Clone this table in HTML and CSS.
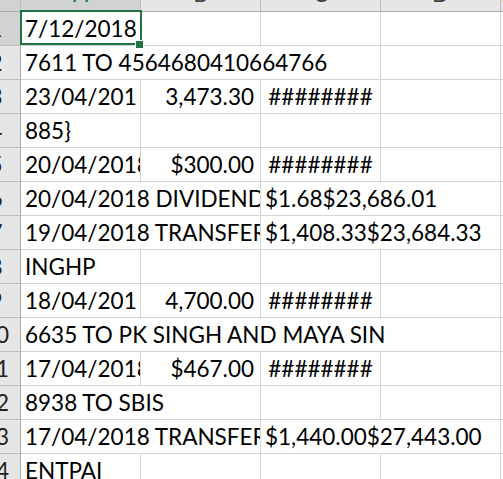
FILE: index.html
```html
<!DOCTYPE html>
<html>
<head>
<meta charset="utf-8">
<link rel="stylesheet" href="styles.css">
</head>
<body>
<div class="sheet">
  <div class="corner"></div>
  <div class="ch sel"><span>A</span></div>
  <div class="ch"><span>B</span></div>
  <div class="ch"><span>C</span></div>
  <div class="ch"><span>D</span></div>
  <div class="ch"><span>E</span></div>

  <div class="rh sel"><span>1</span></div>
  <div class="c active">7/12/2018<span class="selbox"></span><span class="handle"></span></div>
  <div class="c"></div><div class="c"></div><div class="c"></div><div class="c e"></div>

  <div class="rh"><span>2</span></div>
  <div class="c s3">7611 TO 4564680410664766</div>
  <div class="c"></div><div class="c e"></div>

  <div class="rh"><span>3</span></div>
  <div class="c">23/04/201</div>
  <div class="c r">3,473.30</div>
  <div class="c m">########</div>
  <div class="c"></div><div class="c e"></div>

  <div class="rh"><span>4</span></div>
  <div class="c">885}</div>
  <div class="c"></div><div class="c"></div><div class="c"></div><div class="c e"></div>

  <div class="rh"><span>5</span></div>
  <div class="c">20/04/2018</div>
  <div class="c r">$300.00</div>
  <div class="c m">########</div>
  <div class="c"></div><div class="c e"></div>

  <div class="rh"><span>6</span></div>
  <div class="c s2">20/04/2018 DIVIDEND</div>
  <div class="c s2">$1.68$23,686.01</div>
  <div class="c e"></div>

  <div class="rh"><span>7</span></div>
  <div class="c s2">19/04/2018 TRANSFER</div>
  <div class="c s2">$1,408.33$23,684.33</div>
  <div class="c e"></div>

  <div class="rh"><span>8</span></div>
  <div class="c">INGHP</div>
  <div class="c"></div><div class="c"></div><div class="c"></div><div class="c e"></div>

  <div class="rh"><span>9</span></div>
  <div class="c">18/04/201</div>
  <div class="c r">4,700.00</div>
  <div class="c m">########</div>
  <div class="c"></div><div class="c e"></div>

  <div class="rh"><span>10</span></div>
  <div class="c s4">6635 TO PK SINGH AND MAYA SIN</div>
  <div class="c e"></div>

  <div class="rh"><span>11</span></div>
  <div class="c">17/04/2018</div>
  <div class="c r">$467.00</div>
  <div class="c m">########</div>
  <div class="c"></div><div class="c e"></div>

  <div class="rh"><span>12</span></div>
  <div class="c s2">8938 TO SBIS</div>
  <div class="c"></div><div class="c"></div><div class="c e"></div>

  <div class="rh"><span>13</span></div>
  <div class="c s2">17/04/2018 TRANSFER</div>
  <div class="c s2">$1,440.00$27,443.00</div>
  <div class="c e"></div>

  <div class="rh"><span>14</span></div>
  <div class="c">ENTPAI</div>
  <div class="c"></div><div class="c"></div><div class="c"></div><div class="c e"></div>
</div>
</body>
</html>
```
FILE: styles.css
```css
html, body {
  margin: 0;
  padding: 0;
  background: #ffffff;
}
body {
  overflow: hidden;
  height: 479px;
  font-family: Lato, "Open Sans", sans-serif;
  font-size: 22.5px;
  color: #000000;
}
.sheet {
  display: grid;
  grid-template-columns: 21px repeat(4, 120px) 1fr;
  grid-template-rows: 12px;
  grid-auto-rows: 34px;
}
.sheet > div {
  box-sizing: border-box;
  overflow: hidden;
  white-space: nowrap;
}
.corner {
  background: #d2d2d2;
  border-right: 1px solid #bdbdbd;
  border-bottom: 1px solid #ababab;
}
.ch {
  background: #e6e6e6;
  border-right: 1px solid #bdbdbd;
  border-bottom: 1px solid #ababab;
  text-align: center;
  color: #444444;
}
.ch span {
  display: block;
  line-height: 22px;
  margin-top: -17px;
}
.ch.sel {
  background: #d2d2d2;
  color: #217346;
}
.rh {
  background: #e6e6e6;
  border-right: 1px solid #ababab;
  border-bottom: 1px solid #bdbdbd;
  line-height: 33px;
  color: #222222;
}
.rh span {
  display: block;
  width: 46px;
  margin-left: -27px;
  text-align: center;
}
.rh.sel {
  background: #d2d2d2;
}
.c {
  border-right: 1px solid #d4d4d4;
  border-bottom: 1px solid #d4d4d4;
  line-height: 33px;
  padding: 0 6px 0 4px;
}
.c.e {
  border-right: none;
}
.c.r {
  text-align: right;
}
.c.m {
  text-align: center;
  padding: 0;
}
.s2 { grid-column: span 2; }
.s3 { grid-column: span 3; }
.s4 { grid-column: span 4; }
.sheet > .c.active {
  position: relative;
  overflow: visible;
  z-index: 2;
}
.selbox {
  position: absolute;
  top: -2px;
  left: -1px;
  right: -2px;
  bottom: 0;
  border: 2px solid #217346;
}
.handle {
  position: absolute;
  right: -4px;
  bottom: -4px;
  width: 7px;
  height: 7px;
  background: #217346;
  border: 1px solid #ffffff;
}
```
